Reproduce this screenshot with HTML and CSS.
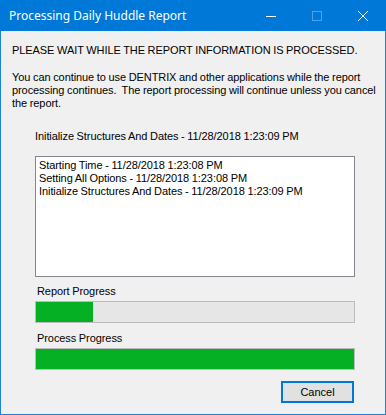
FILE: index.html
```html
<!DOCTYPE html>
<html lang="en">

<head>
    <meta charset="UTF-8">
    <meta name="viewport" content="width=device-width, initial-scale=1.0">
    <title>Processing Daily Huddle Report</title>
    <link rel="stylesheet" href="styles.css">
</head>

<body>

	<div class="window">

		<header class="titlebar">
			<span class="title">Processing Daily Huddle Report</span>
			<div class="caption-buttons">
				<span class="cap-btn">
					<svg width="10" height="10" viewBox="0 0 10 10"><path d="M0 5.5H10" stroke="#fff" stroke-width="1"/></svg>
				</span>
				<span class="cap-btn disabled">
					<svg width="10" height="10" viewBox="0 0 10 10"><rect x="0.5" y="0.5" width="9" height="9" fill="none" stroke="#4aa3ea" stroke-width="1"/></svg>
				</span>
				<span class="cap-btn">
					<svg width="10" height="10" viewBox="0 0 10 10"><path d="M0 0L10 10M10 0L0 10" stroke="#fff" stroke-width="1"/></svg>
				</span>
			</div>
		</header>

		<main class="content">

			<p class="notice">PLEASE WAIT WHILE THE REPORT INFORMATION IS PROCESSED.</p>

			<p class="info">You can continue to use DENTRIX and other applications while the report<br>
			processing continues.&nbsp; The report processing will continue unless you cancel<br>
			the report.</p>

			<div class="inner">
				<p class="status">Initialize Structures And Dates - 11/28/2018 1:23:09 PM</p>

				<ul class="log">
					<li>Starting Time - 11/28/2018 1:23:08 PM</li>
					<li>Setting All Options - 11/28/2018 1:23:08 PM</li>
					<li>Initialize Structures And Dates - 11/28/2018 1:23:09 PM</li>
				</ul>

				<p class="label">Report Progress</p>
				<div class="bar"><div class="fill" style="width: 18%"></div></div>

				<p class="label">Process Progress</p>
				<div class="bar"><div class="fill" style="width: 100%"></div></div>

				<div class="actions">
					<button class="btn">Cancel</button>
				</div>
			</div>

		</main>

	</div>

</body>
</html>
```

FILE: styles.css
```css
body {
	margin: 0;
	padding: 0;
	font-family: "Liberation Sans", Arial, sans-serif;
	font-size: 11px;
	letter-spacing: -0.08px;
	word-spacing: -0.3px;
	color: #000;
	background-color: #f0f0f0;
}

.window {
	box-sizing: border-box;
	width: 386px;
	height: 415px;
	border: 1px solid #1883d7;
	border-top: none;
	background-color: #f0f0f0;
}

.titlebar {
	height: 31px;
	margin: 0 -1px;
	background-color: #0078d7;
	color: #fff;
	display: flex;
	align-items: center;
	justify-content: space-between;
}

.title {
	font-family: "Noto Sans", "Open Sans", sans-serif;
	font-size: 12px;
	letter-spacing: 0;
	word-spacing: 0;
	padding-left: 9px;
	padding-bottom: 1px;
}

.caption-buttons {
	display: flex;
	height: 100%;
}

.cap-btn {
	width: 46px;
	display: flex;
	align-items: center;
	justify-content: center;
}

.cap-btn svg {
	display: block;
}

.content {
	padding: 0 0 0 11px;
}

p {
	margin: 0;
	line-height: 13px;
}

.notice {
	padding-top: 13px;
}

.info {
	margin-top: 14px;
	width: 370px;
	white-space: nowrap;
}

.inner {
	padding-left: 23px;
	width: 320px;
}

.status {
	margin-top: 20px;
}

.log {
	list-style: none;
	margin: 13px 0 0 0;
	padding: 2px 3px;
	box-sizing: border-box;
	height: 121px;
	background-color: #fff;
	border: 1px solid #828790;
}

.log li {
	line-height: 13px;
}

.label {
	margin-top: 8px;
	padding-left: 2px;
}

.bar {
	box-sizing: border-box;
	height: 22px;
	margin-top: 3px;
	background-color: #e6e6e6;
	border: 1px solid #bcbcbc;
}

.bar + .label {
	margin-top: 9px;
}

.fill {
	height: 100%;
	background-color: #06b025;
}

.actions {
	display: flex;
	justify-content: flex-end;
	margin-top: 11px;
	padding-right: 1px;
}

.btn {
	box-sizing: border-box;
	width: 73px;
	height: 22px;
	padding: 0;
	font-family: "Liberation Sans", Arial, sans-serif;
	font-size: 11px;
	color: #000;
	background-color: #e1e1e1;
	border: 2px solid #0078d7;
}
```
